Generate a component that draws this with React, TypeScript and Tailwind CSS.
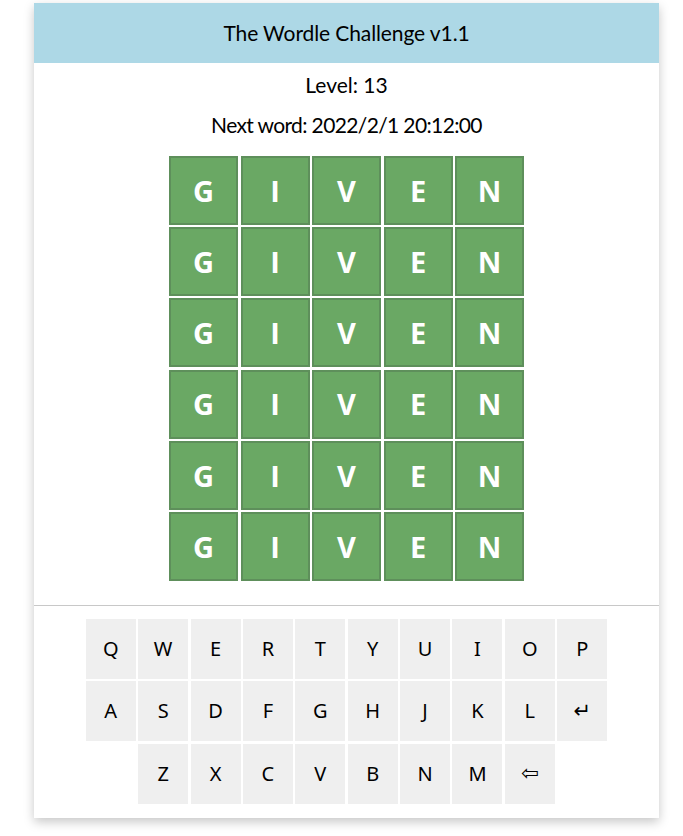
import React from 'react';

const WORD = ['G', 'I', 'V', 'E', 'N'];
const ROWS = 6;

const KEYS: { label: string; col?: string; arrow?: boolean }[] = [
    ...'QWERTYUIOP'.split('').map((k) => ({ label: k })),
    ...'ASDFGHJKL'.split('').map((k) => ({ label: k })),
    { label: '↵', arrow: true },
    { label: 'Z', col: 'col-start-2' },
    ...'XCVBNM'.split('').map((k) => ({ label: k })),
    { label: '⇦', arrow: true },
];

export default function App() {
    return (
        <div className="min-h-screen bg-white pt-[3px]">
            <div className="ml-[34px] w-[625px] bg-white shadow-[0_4px_10px_rgba(0,0,0,0.22)] pb-[14px] font-['Lato','Noto_Sans',sans-serif] text-black">
                {/* Header */}
                <div className="h-[60px] bg-[#add8e6] flex items-center justify-center text-[21px] tracking-[-0.005em]">
                    The Wordle Challenge v1.1
                </div>

                <div className="pt-[8px] text-center text-[21px] leading-[28px]">Level: 13</div>
                <div className="mt-[12px] text-center text-[21px] leading-[28px] tracking-[-0.03em]">
                    Next word: 2022/2/1 20:12:00
                </div>

                {/* Board */}
                <div className="mt-[17px] flex justify-center">
                    <div className="grid grid-cols-5 gap-x-[2.5px] gap-y-[2.2px]">
                        {Array.from({ length: ROWS }).map((_, r) =>
                            WORD.map((ch, c) => (
                                <div
                                    key={`${r}-${c}`}
                                    className="w-[69px] h-[69px] bg-[#6aa864] border-2 border-[#5e8f5b] flex items-center justify-center text-white font-bold text-[29px] font-['Open_Sans','Noto_Sans',sans-serif]"
                                >
                                    {ch}
                                </div>
                            ))
                        )}
                    </div>
                </div>

                <div className="mt-[24px] h-px bg-[#c8c8c8]" />

                {/* Keyboard */}
                <div className="mt-[13px] flex justify-center">
                    <div className="grid grid-cols-[repeat(10,50px)] gap-x-[2.4px] gap-y-[2.5px]">
                        {KEYS.map((k) => (
                            <button
                                key={k.label}
                                className={`h-[60px] w-[50px] bg-[#efefef] flex items-center justify-center ${
                                    k.arrow
                                        ? "text-[21px] font-['DejaVu_Sans',sans-serif]"
                                        : "text-[20px] font-['Noto_Sans',sans-serif]"
                                } ${k.col ?? ''}`}
                            >
                                {k.label}
                            </button>
                        ))}
                    </div>
                </div>
            </div>
        </div>
    );
}
